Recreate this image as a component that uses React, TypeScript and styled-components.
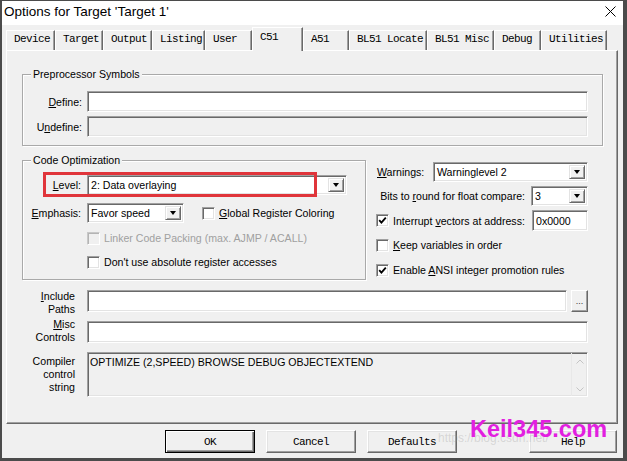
import React from 'react';
import styled, { createGlobalStyle } from 'styled-components';

const GlobalStyle = createGlobalStyle`
  * { box-sizing: border-box; }
  html, body { margin: 0; padding: 0; background: #f0f0f0; }
  body {
    font-family: 'Liberation Sans', Arial, sans-serif;
    font-size: 10.6px;
    color: #000;
  }
`;

const Dialog = styled.div`
  position: relative;
  width: 627px;
  height: 461px;
  display: flex;
  flex-direction: column;
  background: #f0f0f0;
  border-style: solid;
  border-color: #4b4b4b;
  border-width: 1px 4px 3px 2px;
  overflow: hidden;
`;

const TitleBar = styled.div`
  height: 24px;
  flex: none;
  display: flex;
  align-items: center;
  justify-content: space-between;
  padding: 0 7px 4px 2px;
  background: #fff;
  font-size: 13.5px;
  white-space: nowrap;
`;

const TabStrip = styled.div`
  height: 25px;
  flex: none;
  display: flex;
  align-items: flex-end;
  padding-left: 4px;
  position: relative;
  z-index: 1;
`;

const Tab = styled.div<{ $w: number; $active?: boolean }>`
  width: ${p => p.$w}px;
  height: ${p => (p.$active ? 24 : 20)}px;
  margin-bottom: ${p => (p.$active ? -1 : 0)}px;
  padding: ${p => (p.$active ? '3px 0 0 7px' : '2px 0 0 7px')};
  font-family: 'Liberation Mono', 'Courier New', monospace;
  font-size: 11px;
  letter-spacing: -0.6px;
  line-height: 12px;
  white-space: nowrap;
  background: #f0f0f0;
  border-top: 1px solid #fff;
  border-left: 1px solid #fff;
  border-right: 1px solid #696969;
  box-shadow: inset -1px 0 0 #a0a0a0;
`;

const TabPage = styled.div`
  margin-left: 4px;
  width: 612px;
  height: 374px;
  flex: none;
  display: flex;
  flex-direction: column;
  padding-top: 23px;
  border-style: solid;
  border-width: 1px;
  border-color: #fff #696969 #696969 #fff;
  box-shadow: inset -1px -1px 0 #a0a0a0;
`;

const GroupBox = styled.div<{ $w: number; $h: number; $ml?: number }>`
  position: relative;
  width: ${p => p.$w}px;
  height: ${p => p.$h}px;
  margin-left: ${p => p.$ml ?? 0}px;
  flex: none;
  border: 1px solid #a9a9a9;
  box-shadow: inset 1px 1px 0 #fff, 1px 1px 0 #fff;
`;

const Caption = styled.span`
  position: absolute;
  top: -7px;
  left: 8px;
  padding: 0 2px;
  line-height: 13px;
  background: #f0f0f0;
  white-space: nowrap;
`;

const SymbolGrid = styled.div`
  display: grid;
  grid-template-columns: 59px 501px;
  grid-auto-rows: 21px;
  column-gap: 5px;
  row-gap: 4px;
  padding-top: 16px;
`;

const FieldLabel = styled.span`
  align-self: center;
  text-align: right;
  white-space: nowrap;
`;

const TextBox = styled.div<{ $disabled?: boolean; $w?: number; $h?: number; $grow?: boolean; $push?: boolean }>`
  width: ${p => (p.$w ? `${p.$w}px` : 'auto')};
  height: ${p => (p.$h ? `${p.$h}px` : 'auto')};
  flex: ${p => (p.$grow ? '1' : 'none')};
  margin-left: ${p => (p.$push ? 'auto' : '0')};
  display: flex;
  align-items: center;
  padding: 0 3px;
  white-space: nowrap;
  background: ${p => (p.$disabled ? '#f0f0f0' : '#fff')};
  border: 1px solid;
  border-color: #a0a0a0 #fff #fff #a0a0a0;
  box-shadow: inset 1px 1px 0 #696969, inset -1px -1px 0 #e3e3e3;
`;

const MiddleRow = styled.div`
  display: flex;
  margin: 14px 0 0 15px;
`;

const OptRow = styled.div<{ $mt: number }>`
  display: flex;
  align-items: center;
  height: 20px;
  margin-top: ${p => p.$mt}px;
  gap: 6px;
`;

const OptLabel = styled.span`
  width: 58px;
  text-align: right;
  white-space: nowrap;
`;

const CheckRow = styled.div<{ $mt: number; $pl: number }>`
  display: flex;
  align-items: center;
  height: 20px;
  margin-top: ${p => p.$mt}px;
  padding-left: ${p => p.$pl}px;
`;

const CheckItem = styled.label<{ $disabled?: boolean; $ml?: number }>`
  display: flex;
  align-items: center;
  gap: 4px;
  margin-left: ${p => p.$ml ?? 0}px;
  white-space: nowrap;
  color: ${p => (p.$disabled ? '#a0a0a0' : '#000')};
`;

const Box = styled.span<{ $disabled?: boolean }>`
  width: 13px;
  height: 13px;
  flex: none;
  display: flex;
  align-items: center;
  justify-content: center;
  background: ${p => (p.$disabled ? '#f0f0f0' : '#fff')};
  border: 1px solid;
  border-color: ${p => (p.$disabled ? '#c8c8c8 #fff #fff #c8c8c8' : '#a0a0a0 #fff #fff #a0a0a0')};
  box-shadow: ${p =>
    p.$disabled ? 'inset 1px 1px 0 #b4b4b4' : 'inset 1px 1px 0 #696969, inset -1px -1px 0 #e3e3e3'};
`;

const Combo = styled.div<{ $w: number }>`
  width: ${p => p.$w}px;
  height: 20px;
  flex: none;
  display: flex;
  align-items: stretch;
  padding: 2px;
  background: #fff;
  border: 1px solid;
  border-color: #a0a0a0 #fff #fff #a0a0a0;
  box-shadow: inset 1px 1px 0 #696969, inset -1px -1px 0 #e3e3e3;
`;

const ComboText = styled.span`
  flex: 1;
  padding-left: 1px;
  line-height: 14px;
  white-space: nowrap;
  overflow: hidden;
`;

const DropButton = styled.span`
  width: 16px;
  flex: none;
  display: flex;
  align-items: center;
  justify-content: center;
  background: #f0f0f0;
  border: 1px solid;
  border-color: #e3e3e3 #696969 #696969 #e3e3e3;
  box-shadow: inset 1px 1px 0 #fff, inset -1px -1px 0 #a0a0a0;
  &::after {
    content: '';
    border-left: 3.5px solid transparent;
    border-right: 3.5px solid transparent;
    border-top: 4px solid #000;
  }
`;

const Highlight = styled.div`
  position: absolute;
  left: 20px;
  top: 11px;
  width: 274px;
  height: 25px;
  border: 3px solid #e0353b;
  pointer-events: none;
`;

const RightColumn = styled.div`
  width: 212px;
  margin-left: 10px;
  display: flex;
  flex-direction: column;
`;

const RightRow = styled.div<{ $mt: number; $h?: number; $end?: boolean }>`
  display: flex;
  align-items: center;
  justify-content: ${p => (p.$end ? 'flex-end' : 'flex-start')};
  height: ${p => p.$h ?? 20}px;
  margin-top: ${p => p.$mt}px;
  gap: 6px;
  white-space: nowrap;
`;

const WarnLabel = styled.span`
  width: 51px;
  padding-left: 1px;
`;

const BottomGrid = styled.div`
  display: grid;
  grid-template-columns: 68px 501px;
  grid-template-rows: 22px 22px 45px;
  column-gap: 12px;
  row-gap: 9px;
  margin-top: 10px;
`;

const MultiLabel = styled.span<{ $dy: number }>`
  align-self: start;
  margin-top: ${p => p.$dy}px;
  text-align: right;
  line-height: 13px;
`;

const PathCell = styled.div`
  display: flex;
  gap: 4px;
`;

const BrowseButton = styled.div`
  width: 17px;
  flex: none;
  display: flex;
  align-items: flex-end;
  justify-content: center;
  padding-bottom: 5px;
  font-size: 9px;
  line-height: 9px;
  color: #333;
  background: #f0f0f0;
  border: 1px solid;
  border-color: #fff #696969 #696969 #fff;
  box-shadow: inset -1px -1px 0 #a0a0a0;
`;

const ControlBox = styled.div`
  display: flex;
  background: #f0f0f0;
  border: 1px solid;
  border-color: #a0a0a0 #fff #fff #a0a0a0;
  box-shadow: inset 1px 1px 0 #696969, inset -1px -1px 0 #e3e3e3;
`;

const ControlText = styled.div`
  flex: 1;
  padding: 3px 0 0 2px;
  line-height: 13px;
  white-space: nowrap;
`;

const ScrollBar = styled.div`
  width: 16px;
  flex: none;
  display: flex;
  flex-direction: column;
  justify-content: space-between;
  align-items: center;
  padding: 6px 0 4px;
  border-left: 1px solid #e8e8e8;
`;

const ButtonBar = styled.div`
  display: flex;
  gap: 11px;
  padding: 6px 6px 0 163px;
`;

const DlgButton = styled.div<{ $w: number; $default?: boolean; $push?: boolean }>`
  width: ${p => p.$w}px;
  height: 23px;
  margin-left: ${p => (p.$push ? 'auto' : '0')};
  display: flex;
  align-items: center;
  justify-content: center;
  font-family: 'Liberation Mono', 'Courier New', monospace;
  font-size: 11px;
  letter-spacing: -0.6px;
  background: #f0f0f0;
  border: 1px solid;
  border-color: ${p => (p.$default ? '#000' : '#fff #696969 #696969 #fff')};
  box-shadow: ${p =>
    p.$default
      ? 'inset 1px 1px 0 #fff, inset -1px -1px 0 #696969, inset -2px -2px 0 #a0a0a0'
      : 'inset -1px -1px 0 #a0a0a0, inset 1px 1px 0 #e3e3e3'};
`;

const Watermark = styled.span`
  position: absolute;
  left: 468px;
  top: 415px;
  font-family: 'Liberation Sans', Arial, sans-serif;
  font-weight: bold;
  font-size: 23.5px;
  color: #e21fe0;
  white-space: nowrap;
`;

const FaintMark = styled.span`
  position: absolute;
  left: 436px;
  top: 430px;
  font-size: 12px;
  color: rgba(150, 150, 150, 0.3);
  white-space: nowrap;
`;

const tabs: [string, number][] = [
  ['Device', 49],
  ['Target', 48],
  ['Output', 49],
  ['Listing', 53],
  ['User', 47],
  ['C51', 51],
  ['A51', 46],
  ['BL51 Locate', 78],
  ['BL51 Misc', 67],
  ['Debug', 47],
  ['Utilities', 66],
];

const Check = ({ checked, disabled }: { checked?: boolean; disabled?: boolean }) => (
  <Box $disabled={disabled}>
    {checked && (
      <svg width="9" height="9" viewBox="0 0 9 9">
        <path d="M1.2 4.2 L3.4 6.6 L7.8 1.6" fill="none" stroke="#000" strokeWidth="1.8" />
      </svg>
    )}
  </Box>
);

const Chevron = ({ up }: { up?: boolean }) => (
  <svg width="8" height="5" viewBox="0 0 8 5">
    <path d={up ? 'M0.5 4.5 L4 1 L7.5 4.5' : 'M0.5 0.5 L4 4 L7.5 0.5'} fill="none" stroke="#c4c4c4" strokeWidth="1" />
  </svg>
);

const App: React.FC = () => {
  return (
    <Dialog>
      <GlobalStyle />
      <TitleBar>
        <span>Options for Target 'Target 1'</span>
        <svg width="11" height="11" viewBox="0 0 11 11">
          <path d="M0.5 0.5 L10.5 10.5 M10.5 0.5 L0.5 10.5" stroke="#000" strokeWidth="1" />
        </svg>
      </TitleBar>

      <TabStrip>
        {tabs.map(([name, w]) => (
          <Tab key={name} $w={w} $active={name === 'C51'}>
            {name}
          </Tab>
        ))}
      </TabStrip>

      <TabPage>
        <GroupBox $w={581} $h={72} $ml={15}>
          <Caption>Preprocessor Symbols</Caption>
          <SymbolGrid>
            <FieldLabel>
              <u>D</u>efine:
            </FieldLabel>
            <TextBox />
            <FieldLabel>
              U<u>n</u>define:
            </FieldLabel>
            <TextBox $disabled />
          </SymbolGrid>
        </GroupBox>

        <MiddleRow>
          <GroupBox $w={344} $h={120}>
            <Caption>Code Optimization</Caption>
            <OptRow $mt={14}>
              <OptLabel>
                <u>L</u>evel:
              </OptLabel>
              <Combo $w={260}>
                <ComboText>2: Data overlaying</ComboText>
                <DropButton />
              </Combo>
            </OptRow>
            <OptRow $mt={8}>
              <OptLabel>
                <u>E</u>mphasis:
              </OptLabel>
              <Combo $w={97}>
                <ComboText>Favor speed</ComboText>
                <DropButton />
              </Combo>
              <CheckItem $ml={12}>
                <Check />
                <span>
                  <u>G</u>lobal Register Coloring
                </span>
              </CheckItem>
            </OptRow>
            <CheckRow $mt={5} $pl={64}>
              <CheckItem $disabled>
                <Check disabled />
                <span>Linker Code Packing (max. AJMP / ACALL)</span>
              </CheckItem>
            </CheckRow>
            <CheckRow $mt={4} $pl={64}>
              <CheckItem>
                <Check />
                <span>Don't use absolute register accesses</span>
              </CheckItem>
            </CheckRow>
            <Highlight />
          </GroupBox>

          <RightColumn>
            <RightRow $mt={2}>
              <WarnLabel>
                <u>W</u>arnings:
              </WarnLabel>
              <Combo $w={155}>
                <ComboText>Warninglevel 2</ComboText>
                <DropButton />
              </Combo>
            </RightRow>
            <RightRow $mt={4} $end>
              <span>
                Bits to <u>r</u>ound for float compare:
              </span>
              <Combo $w={57}>
                <ComboText>3</ComboText>
                <DropButton />
              </Combo>
            </RightRow>
            <RightRow $mt={4} $h={21}>
              <CheckItem>
                <Check checked />
                <span>
                  Interrupt <u>v</u>ectors at address:
                </span>
              </CheckItem>
              <TextBox $w={56} $h={21} $push>
                0x0000
              </TextBox>
            </RightRow>
            <RightRow $mt={4}>
              <CheckItem>
                <Check />
                <span>
                  <u>K</u>eep variables in order
                </span>
              </CheckItem>
            </RightRow>
            <RightRow $mt={5}>
              <CheckItem>
                <Check checked />
                <span>
                  Enable <u>A</u>NSI integer promotion rules
                </span>
              </CheckItem>
            </RightRow>
          </RightColumn>
        </MiddleRow>

        <BottomGrid>
          <MultiLabel $dy={0}>
            <u>I</u>nclude
            <br />
            Paths
          </MultiLabel>
          <PathCell>
            <TextBox $grow />
            <BrowseButton>...</BrowseButton>
          </PathCell>
          <MultiLabel $dy={-3}>
            <u>M</u>isc
            <br />
            Controls
          </MultiLabel>
          <TextBox />
          <MultiLabel $dy={3}>
            Compiler
            <br />
            control
            <br />
            string
          </MultiLabel>
          <ControlBox>
            <ControlText>OPTIMIZE (2,SPEED) BROWSE DEBUG OBJECTEXTEND</ControlText>
            <ScrollBar>
              <Chevron up />
              <Chevron />
            </ScrollBar>
          </ControlBox>
        </BottomGrid>
      </TabPage>

      <ButtonBar>
        <DlgButton $w={90} $default>
          OK
        </DlgButton>
        <DlgButton $w={90}>Cancel</DlgButton>
        <DlgButton $w={90}>Defaults</DlgButton>
        <DlgButton $w={88} $push>
          Help
        </DlgButton>
      </ButtonBar>

      <FaintMark>https://blog.csdn.net/</FaintMark>
      <Watermark>Keil345.com</Watermark>
    </Dialog>
  );
};

export default App;
